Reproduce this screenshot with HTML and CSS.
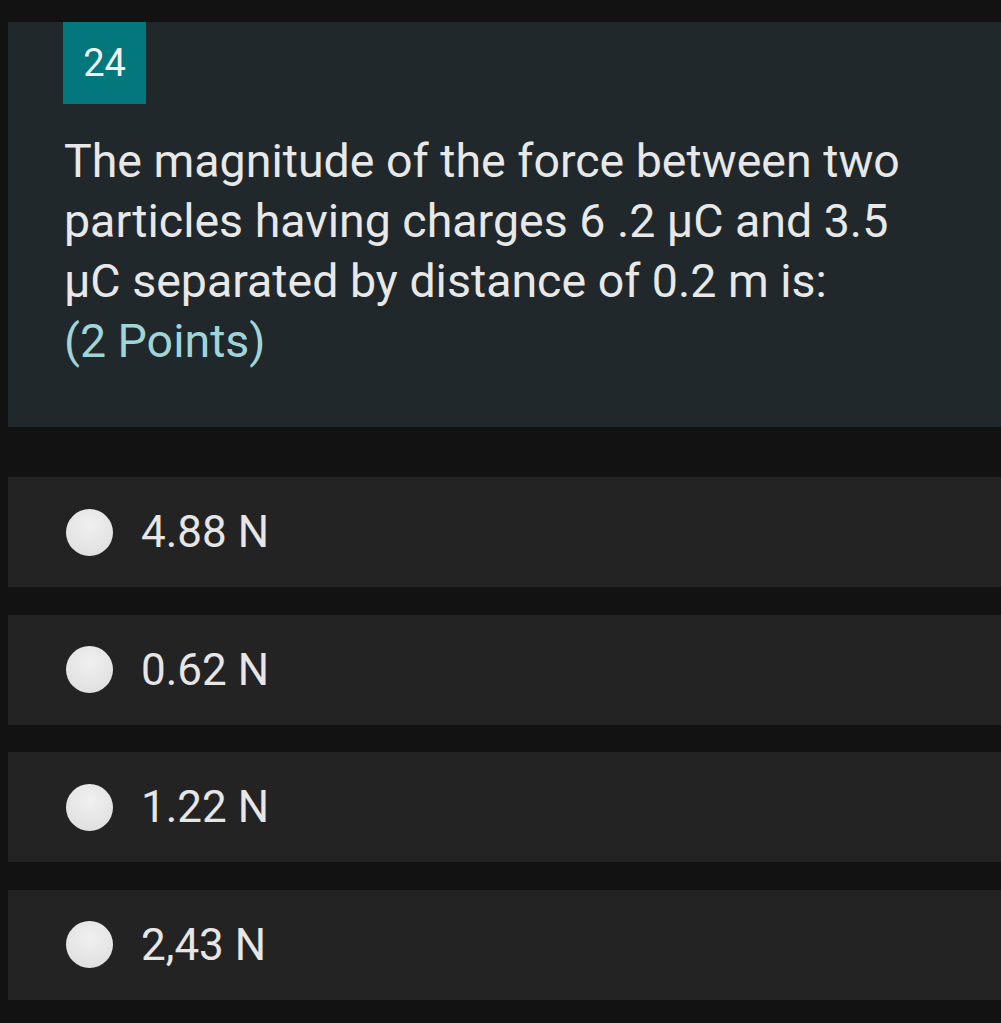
FILE: index.html
```html
<!DOCTYPE html>
<html>
<head>
<meta charset="utf-8">
<link rel="stylesheet" href="styles.css">
</head>
<body>
<div class="page">
  <section class="question">
    <div class="badge">24</div>
    <div class="qtext">The magnitude of the force between two particles having charges 6 .2 μC and 3.5 μC separated by distance of 0.2 m is:<br><span class="points">(2 Points)</span></div>
  </section>
  <div class="options">
    <div class="option"><span class="radio"></span><span class="label">4.88 N</span></div>
    <div class="option"><span class="radio"></span><span class="label">0.62 N</span></div>
    <div class="option"><span class="radio"></span><span class="label">1.22 N</span></div>
    <div class="option"><span class="radio"></span><span class="label">2,43 N</span></div>
  </div>
</div>
</body>
</html>
```
FILE: styles.css
```css
html, body {
  margin: 0;
  padding: 0;
  background: #121212;
}
body {
  font-family: Roboto, "Liberation Sans", sans-serif;
  color: #e8e8e8;
  overflow: hidden;
}
.page {
  padding: 22px 0 0 8px;
}
.question {
  background: #21282b;
  padding: 0 40px 56px 55px;
}
.badge {
  width: 83px;
  height: 82px;
  background: #03787c;
  color: #f2f2f2;
  font-size: 38px;
  display: flex;
  align-items: center;
  justify-content: center;
}
.qtext {
  margin-top: 27px;
  font-size: 46.5px;
  line-height: 60px;
  padding-left: 1px;
  width: 870px;
}
.points {
  color: #9fd5d9;
}
.options {
  margin-top: 50px;
  display: flex;
  flex-direction: column;
  gap: 27.5px;
}
.option {
  background: #232323;
  height: 110px;
  display: flex;
  align-items: center;
  padding-left: 58px;
}
.radio {
  width: 47px;
  height: 47px;
  border-radius: 50%;
  background: radial-gradient(circle at 50% 35%, #f0f0f0 0%, #e2e2e2 70%, #d6d6d6 100%);
  flex-shrink: 0;
}
.label {
  margin-left: 28px;
  font-size: 44px;
  color: #e6e6e6;
}
```
